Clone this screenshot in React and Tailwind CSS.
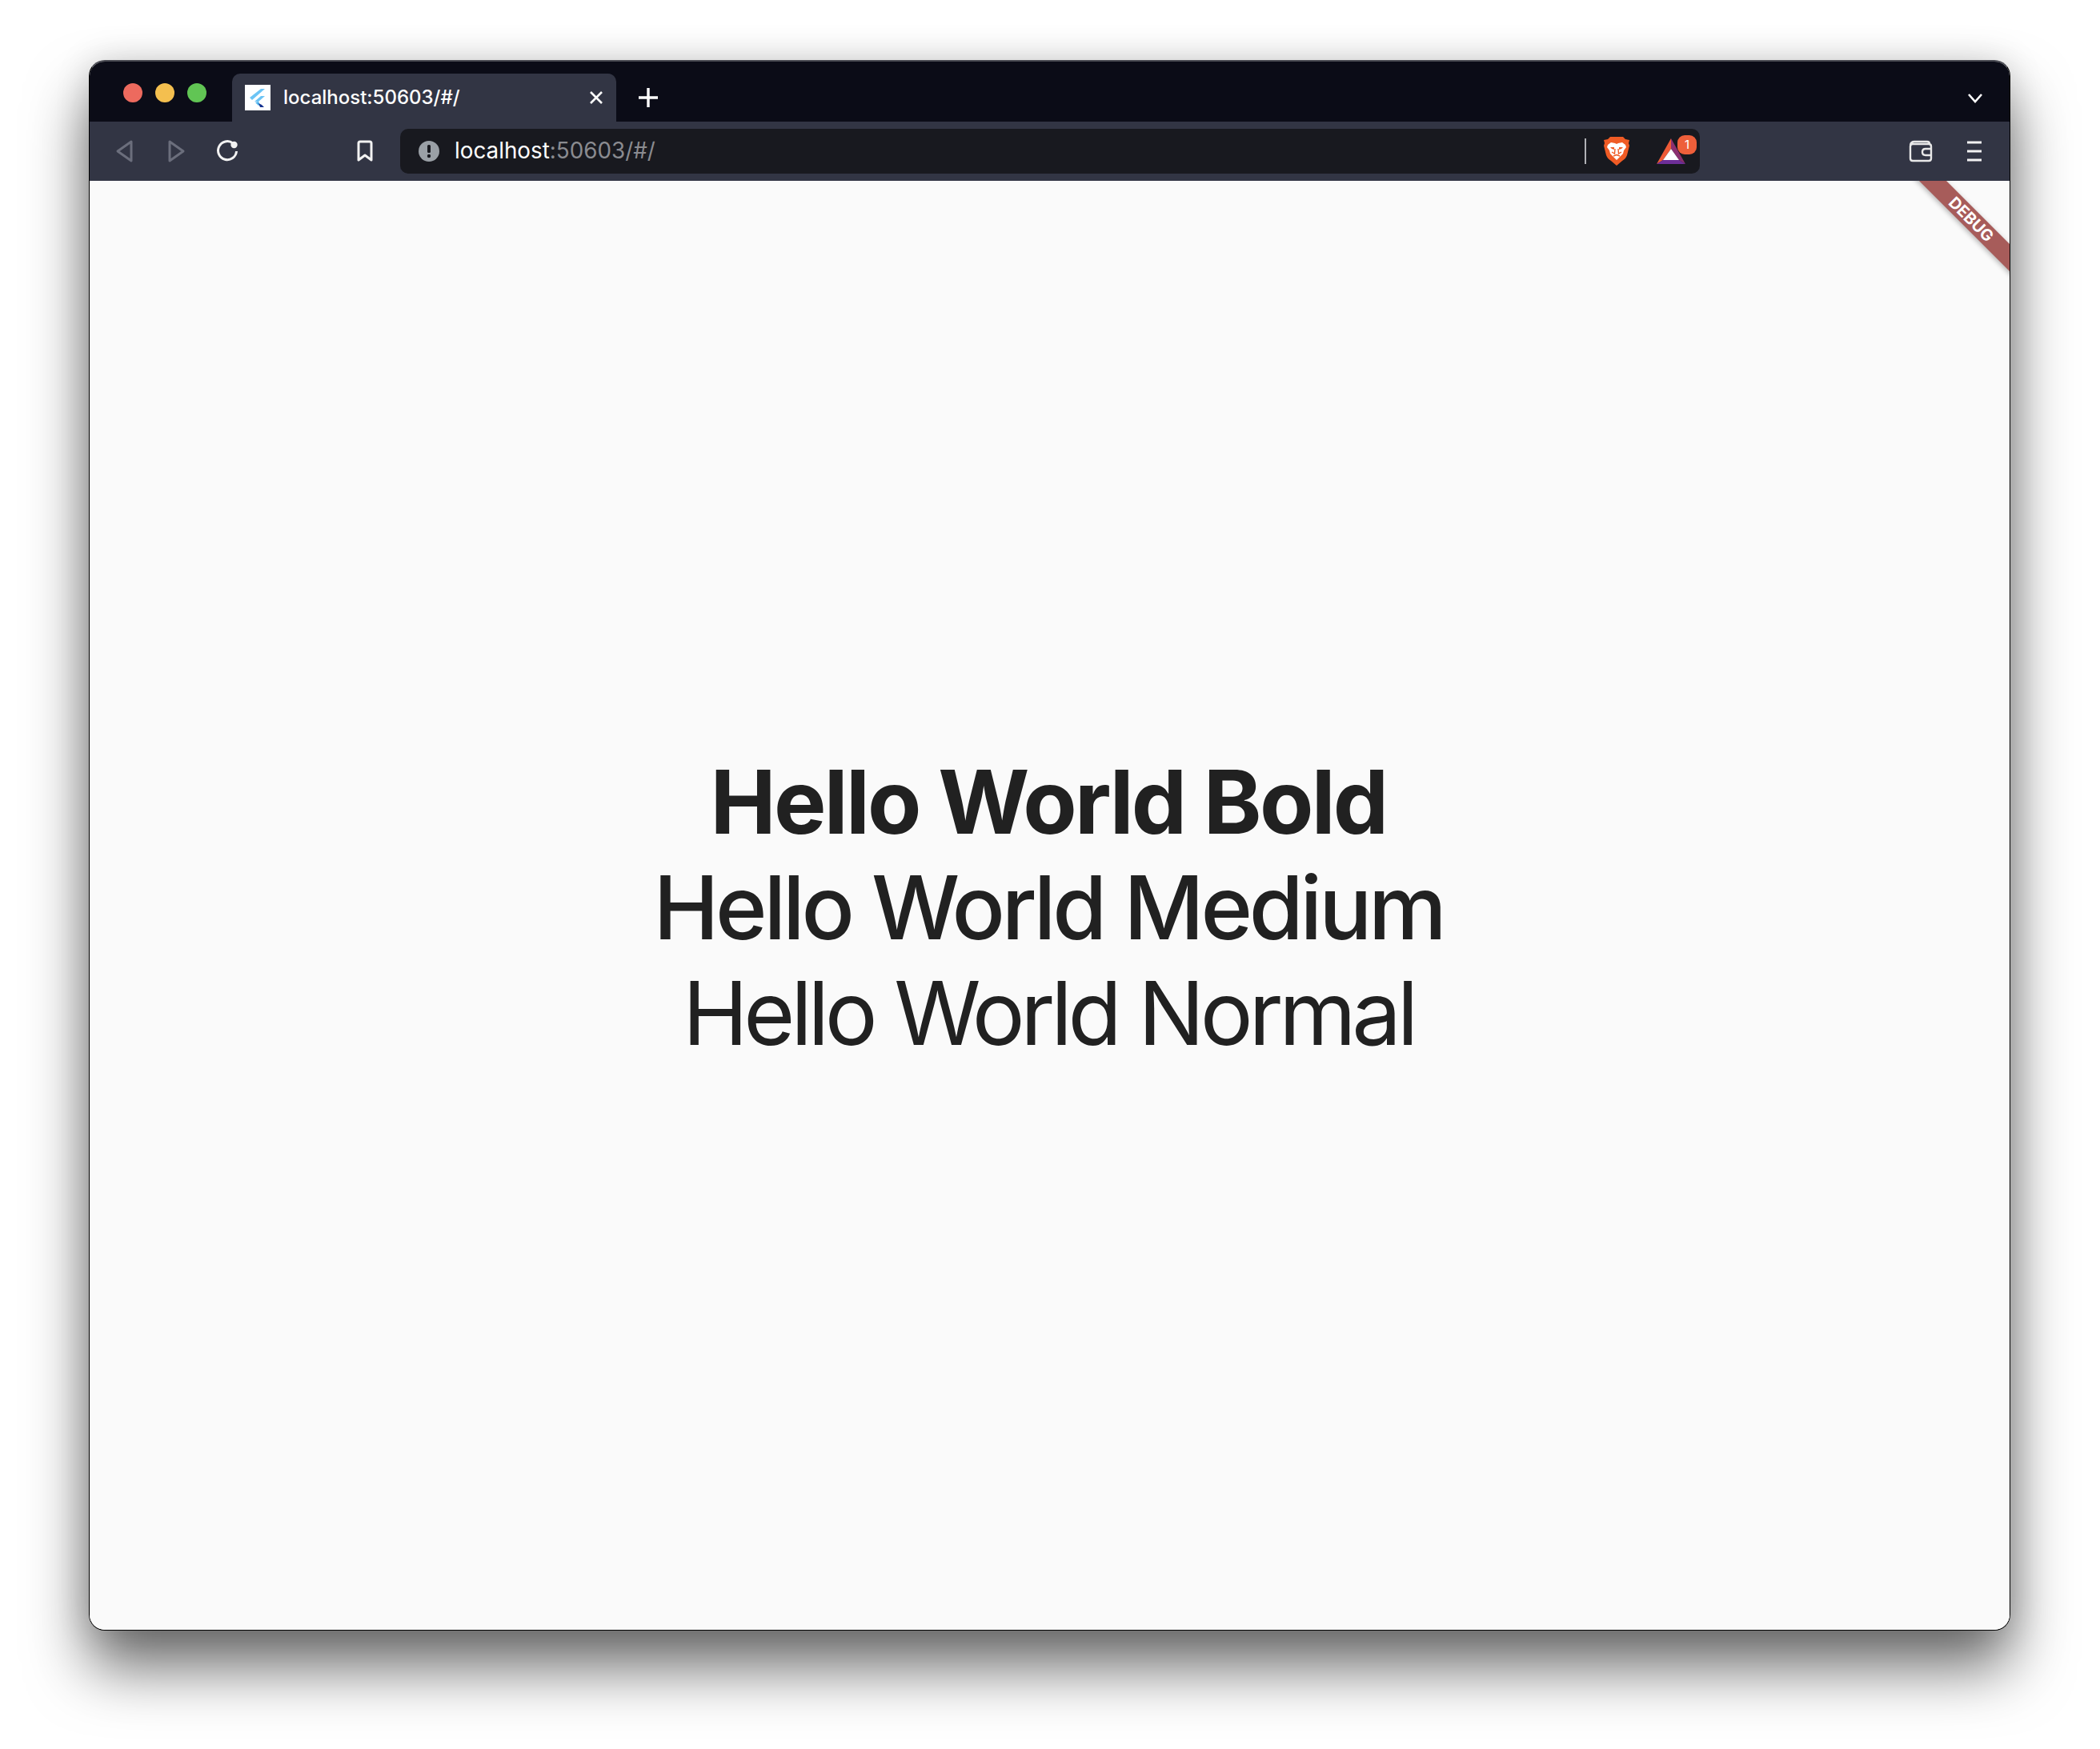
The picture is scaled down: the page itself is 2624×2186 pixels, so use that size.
import React from "react";

const Favicon = () => (
  <div className="w-[32px] h-[32px] bg-white shrink-0">
    <svg width="32" height="32" viewBox="0 0 32 32">
      <path d="M6 16 L20 5 H25 L9 19 Z" fill="#6cc4f5" />
      <path d="M12 21 L20 14 H25 L17 21 Z" fill="#6cc4f5" />
      <path d="M13 22 L17 21 L19 25 L17 26 Z" fill="#54b6ee" />
      <path d="M17 23 L21 25 L24 28 H19 Z" fill="#13318f" />
    </svg>
  </div>
);

const Brave = () => (
  <svg width="32" height="36" viewBox="0 0 32 36">
    <path d="M8 0 H24 L27 3 L32 4 L31 8 L32 11 L29 23 C28 26 26 28 23 30 L16 36 L9 30 C6 28 4 26 3 23 L0 11 L1 8 L0 4 L5 3 Z" fill="#ef5b25" />
    <path d="M5 10 L9 7 L14 8 L16 9 L18 8 L23 7 L27 10 L28 13 L25 17 L24 21 L21 24 L16 29 L11 24 L8 21 L7 17 L4 13 Z" fill="#fff" />
    <path d="M8 13 L13 13 L13 16 L10 15 Z M24 13 L19 13 L19 16 L22 15 Z" fill="#ef5b25" />
    <path d="M14 15 L13.5 21 L10 19 M18 15 L18.5 21 L22 19 M12 24 L16 22.5 L20 24" stroke="#ef5b25" strokeWidth="1.4" fill="none" />
  </svg>
);

const Bat = () => (
  <svg width="36" height="32" viewBox="0 0 36 32">
    <path d="M18 0 L18 13 L8 27 L0 32 Z" fill="#ee5a36" />
    <path d="M18 0 L36 32 L28 27 L18 13 Z" fill="#8b2f6f" />
    <path d="M0 32 L8 27 H28 L36 32 Z" fill="#6d2e98" />
    <path d="M18 13 L28 27 H8 Z" fill="#fff" />
  </svg>
);

export default function App() {
  return (
    <div className="w-[2624px] h-[2186px] bg-white pl-[111px] pt-[75px] overflow-hidden">
      <div className="w-[2401px] h-[1963px] rounded-[20px] flex flex-col shadow-[0_46px_76px_rgba(0,0,0,0.58),0_0_44px_rgba(0,0,0,0.14)] bg-[#fafafa] overflow-hidden border border-black border-t-[#4a4b52] border-t-2 font-['Inter',sans-serif]">
        {/* Tab strip */}
        <div className="h-[75px] shrink-0 bg-[#0b0c17] flex items-end pl-[42px] pr-[32px]">
          <div className="self-stretch flex items-center gap-[16px] mr-[32px] pt-[2px]">
            <div className="w-[24px] h-[24px] rounded-full bg-[#ed6a5e]" />
            <div className="w-[24px] h-[24px] rounded-full bg-[#f4bf4f]" />
            <div className="w-[24px] h-[24px] rounded-full bg-[#61c554]" />
          </div>
          <div className="w-[480px] h-[60px] bg-[#323544] rounded-t-[10px] flex items-center pl-[16px] pr-[15px]">
            <Favicon />
            <span className="ml-[16px] text-[24px] font-medium text-white leading-none">localhost:50603/#/</span>
            <svg className="ml-auto" width="20" height="20" viewBox="0 0 20 20">
              <path d="M3 3 L17 17 M17 3 L3 17" stroke="#fff" strokeWidth="2.6" />
            </svg>
          </div>
          <div className="h-[60px] flex items-center ml-[27px]">
            <svg width="26" height="26" viewBox="0 0 26 26">
              <path d="M13 1 V25 M1 13 H25" stroke="#fff" strokeWidth="3.4" />
            </svg>
          </div>
          <div className="h-[60px] flex items-center ml-auto pt-[2px] mr-[1px]">
            <svg width="20" height="14" viewBox="0 0 20 14">
              <path d="M2 2 L10 11 L18 2" stroke="#fff" strokeWidth="2.6" fill="none" />
            </svg>
          </div>
        </div>
        {/* Toolbar */}
        <div className="h-[74px] shrink-0 bg-[#323544] flex items-center pl-[32px] pr-[32px]">
          <svg width="24" height="30" viewBox="0 0 24 30" className="shrink-0">
            <path d="M20 3 L3 15 L20 27 Z" stroke="#6b6e7c" strokeWidth="3" strokeLinejoin="round" fill="none" />
          </svg>
          <svg width="24" height="30" viewBox="0 0 24 30" className="shrink-0 ml-[40px]">
            <path d="M4 3 L21 15 L4 27 Z" stroke="#6b6e7c" strokeWidth="3" strokeLinejoin="round" fill="none" />
          </svg>
          <svg width="28" height="28" viewBox="0 0 28 28" className="shrink-0 ml-[38px]">
            <path d="M21 4 A11.5 11.5 0 1 0 25.5 14" stroke="#f2f2f2" strokeWidth="3" fill="none" />
            <circle cx="22.5" cy="6" r="4.2" fill="#f2f2f2" />
          </svg>
          <svg width="22" height="28" viewBox="0 0 22 28" className="shrink-0 ml-[147px]">
            <path d="M3 4 Q3 2 5 2 H17 Q19 2 19 4 V25 L11 19 L3 25 Z" stroke="#f2f2f2" strokeWidth="3" strokeLinejoin="round" fill="none" />
          </svg>
          <div className="ml-[33px] w-[1624px] h-[56px] bg-[#18191f] rounded-[10px] flex items-center pl-[22px] relative shrink-0">
            <svg width="28" height="28" viewBox="0 0 28 28" className="shrink-0">
              <circle cx="14" cy="14" r="13" fill="#9aa0a6" />
              <rect x="12" y="6" width="4" height="10" rx="1.5" fill="#18191f" />
              <circle cx="14" cy="20" r="2.2" fill="#18191f" />
            </svg>
            <span className="ml-[18px] text-[27.8px] leading-none text-white">localhost<span className="text-[#8a8b90]">:50603/#/</span></span>
            <div className="ml-auto w-[2px] h-[32px] bg-[#b0b1b5] shrink-0" />
            <div className="ml-[22px] shrink-0 flex"><Brave /></div>
            <div className="ml-[34px] mr-[18px] mt-[-1px] shrink-0 flex"><Bat /></div>
            <div className="absolute left-[1596px] top-[8px] w-[24px] h-[24px] rounded-[9px] bg-[#ee5f3a] text-white text-[15px] leading-[24px] text-center">1</div>
          </div>
          <svg width="32" height="28" viewBox="0 0 32 28" className="shrink-0 ml-[260px]">
            <path d="M3 8 V23 Q3 26 6 26 H26 Q29 26 29 23 V8 Q29 5 26 5 H6 Q3 5 3 8 Z M3 6 Q4 2 8 2 H24 Q27 2 27 5 M29 11 H22 Q18 11 18 15 Q18 19 22 19 H29" stroke="#e8e8e8" strokeWidth="2.4" fill="none" />
          </svg>
          <svg width="18" height="26" viewBox="0 0 18 26" className="shrink-0 ml-[42px]">
            <path d="M0 2 H18 M0 13 H18 M0 24 H18" stroke="#f2f2f2" strokeWidth="3" />
          </svg>
        </div>
        {/* Content */}
        <div className="flex-1 relative overflow-hidden flex flex-col items-center justify-center pt-[5px] pr-[3px] text-[#212121] text-[110px] leading-[132px] bg-[#fafafa]">
          <div className="font-bold tracking-[-2.7px]">Hello World Bold</div>
          <div className="font-medium tracking-[-4.2px]">Hello World Medium</div>
          <div className="font-normal tracking-[-5.3px]">Hello World Normal</div>
          <div className="absolute top-[36px] right-[-72px] w-[240px] h-[24px] bg-[#a75c5a] rotate-45 flex items-center justify-center text-white text-[20px] font-bold leading-none shadow-[0_2px_6px_rgba(0,0,0,0.3)]">DEBUG</div>
        </div>
      </div>
    </div>
  );
}
